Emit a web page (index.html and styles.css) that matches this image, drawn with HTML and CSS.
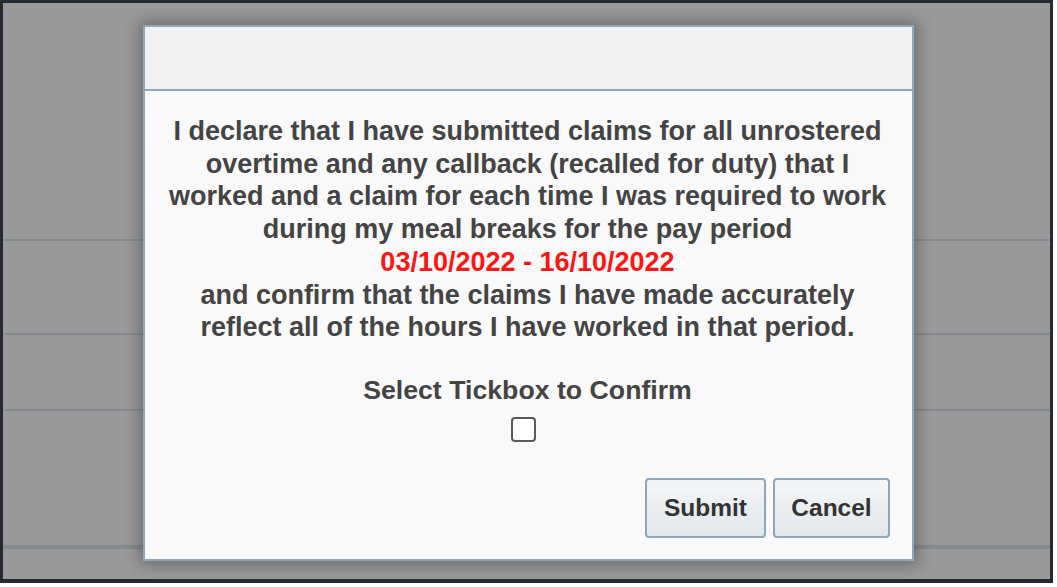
FILE: index.html
```html
<!DOCTYPE html>
<html>
<head>
<meta charset="utf-8">
<link rel="stylesheet" href="styles.css">
</head>
<body>
<div class="frame">
  <div class="bg">
    <div class="row r1"></div>
    <div class="row r2"></div>
    <div class="row r3"></div>
    <div class="row r4"></div>
    <div class="row r5"></div>
  </div>
  <div class="dialog">
    <div class="dialog-header"></div>
    <div class="dialog-body">
      <p class="declaration">I declare that I have submitted claims for all unrostered<br>overtime and any callback (recalled for duty) that I<br>worked and a claim for each time I was required to work<br>during my meal breaks for the pay period<br><span class="period">03/10/2022 - 16/10/2022</span><br>and confirm that the claims I have made accurately<br>reflect all of the hours I have worked in that period.</p>
      <p class="confirm-label">Select Tickbox to Confirm</p>
      <span class="tickbox"></span>
      <div class="actions">
        <button class="btn btn-submit">Submit</button>
        <button class="btn btn-cancel">Cancel</button>
      </div>
    </div>
  </div>
</div>
</body>
</html>
```

FILE: styles.css
```css
html, body {
  margin: 0;
  padding: 0;
  background: #ffffff;
}
.frame {
  position: relative;
  width: 1053px;
  height: 583px;
  box-sizing: border-box;
  border: 3px solid #232a31;
  border-bottom-width: 4px;
  background: #999999;
  overflow: hidden;
}
.bg {
  display: flex;
  flex-direction: column;
}
.row {
  border-bottom: 2px solid #868b91;
}
.r1 { height: 236px; }
.r2 { height: 92px; }
.r3 { height: 74px; }
.r4 { height: 134px; }
.dialog {
  position: absolute;
  left: 140px;
  top: 22px;
  width: 771px;
  height: 536px;
  box-sizing: border-box;
  border: 2px solid #8ea7be;
  background: #f9f9f9;
  box-shadow: 0 0 14px 4px rgba(0, 0, 0, 0.28);
  display: flex;
  flex-direction: column;
  font-family: "Liberation Sans", Arial, sans-serif;
  color: #444444;
}
.dialog-header {
  height: 62px;
  background: #f1f1f1;
  border-bottom: 2px solid #8ea7be;
}
.dialog-body {
  flex: 1;
  display: flex;
  flex-direction: column;
  align-items: center;
  padding: 24px 22px 0 20px;
}
.declaration {
  margin: 0;
  text-align: center;
  font-size: 27px;
  font-weight: 700;
  line-height: 32.7px;
  white-space: nowrap;
}
.period {
  color: #ff1414;
}
.confirm-label {
  margin: 30px 0 0 0;
  font-size: 26.7px;
  font-weight: 700;
  line-height: 32px;
}
.tickbox {
  margin: 11px 8px 0 0;
  width: 21px;
  height: 21px;
  border: 2px solid #5a5a5a;
  border-radius: 4px;
  background: #ffffff;
}
.actions {
  align-self: flex-end;
  margin-top: 36px;
  display: flex;
  gap: 7px;
}
.btn {
  height: 60px;
  padding: 0;
  border: 2px solid #8fa5ba;
  border-radius: 4px;
  background: linear-gradient(#f4f6f8, #e3e7eb);
  font-family: "Liberation Sans", Arial, sans-serif;
  font-size: 24.5px;
  font-weight: 700;
  color: #333333;
}
.btn-submit {
  width: 121px;
}
.btn-cancel {
  width: 117px;
}
```
